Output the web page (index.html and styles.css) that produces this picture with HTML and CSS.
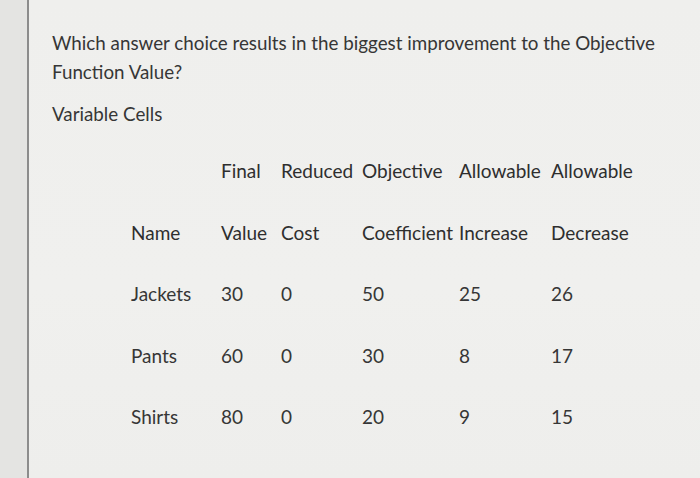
FILE: index.html
```html
<!DOCTYPE html>
<html>
<head>
<meta charset="utf-8">
<link rel="stylesheet" href="styles.css">
</head>
<body>
<div class="page">
  <div class="gutter"></div>
  <div class="content">
    <p class="question">Which answer choice results in the biggest improvement to the Objective Function Value?</p>
    <p class="label">Variable Cells</p>
    <div class="table">
      <div class="row head">
        <span></span><span>Final</span><span>Reduced</span><span>Objective</span><span>Allowable</span><span>Allowable</span>
      </div>
      <div class="row head">
        <span>Name</span><span>Value</span><span>Cost</span><span>Coefficient</span><span>Increase</span><span>Decrease</span>
      </div>
      <div class="row">
        <span>Jackets</span><span>30</span><span>0</span><span>50</span><span>25</span><span>26</span>
      </div>
      <div class="row">
        <span>Pants</span><span>60</span><span>0</span><span>30</span><span>8</span><span>17</span>
      </div>
      <div class="row">
        <span>Shirts</span><span>80</span><span>0</span><span>20</span><span>9</span><span>15</span>
      </div>
    </div>
  </div>
</div>
</body>
</html>
```
FILE: styles.css
```css
html, body {
  margin: 0;
  padding: 0;
}
body {
  width: 700px;
  height: 478px;
  overflow: hidden;
  background: #eeeeec;
  font-family: Lato, "Open Sans", sans-serif;
  color: #363636;
}
.page {
  display: flex;
  height: 478px;
}
.gutter {
  width: 27px;
  flex: none;
  background: #e4e4e2;
  border-right: 2px solid #8c8c8c;
}
.content {
  flex: 1;
  padding: 28px 0 0 23px;
  background: linear-gradient(180deg, #efefed 0%, #f0f0ee 60%, #eeeeec 100%);
}
.question {
  margin: 0;
  font-size: 18.8px;
  line-height: 29px;
  width: 640px;
}
.label {
  margin: 13px 0 0 0;
  font-size: 18.8px;
  line-height: 29px;
}
.table {
  margin: 31px 0 0 79px;
}
.row {
  display: grid;
  grid-template-columns: 90px 60px 81px 97px 92px auto;
  font-size: 19px;
  line-height: 24px;
  height: 61.5px;
}
.head {
  color: #2e2e2e;
}
```
